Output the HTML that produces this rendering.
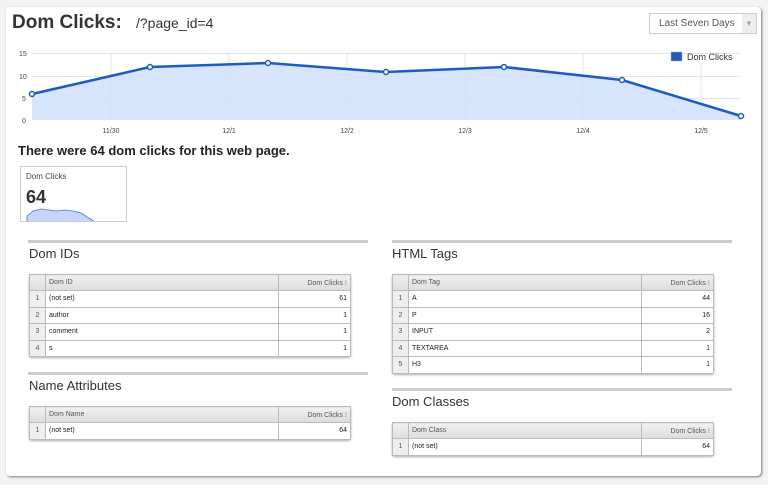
<!DOCTYPE html>
<html><head><style>
body{margin:0;width:768px;height:485px;background:#f2f3f2;font-family:"Liberation Sans",sans-serif;position:relative;overflow:hidden}
.card{position:absolute;left:6px;top:7px;width:755px;height:469px;background:#fff;border-radius:4px;box-shadow:1px 1px 2px #777}
.a{position:absolute}
.rule{position:absolute;height:3px;background:#ccc}
h3{position:absolute;margin:0;font-weight:normal;font-size:13px;color:#333}
table{position:absolute;border-collapse:collapse;font-size:7px;color:#222;border:1px solid #aaa;border-radius:3px;box-shadow:0 1px 2px #aaa}
td{height:16.5px;border:1px solid #bbb;padding:0 3px;box-sizing:border-box;vertical-align:middle}
tr.h td{background:linear-gradient(#f0f0f0,#dcdcdc);color:#555;height:16px}
td.i{background:#eee;color:#555;text-align:center;width:16px;padding:0}
td.n{text-align:right}
</style></head><body>
<div class="card"></div>
<div class="a" style="left:12px;top:12px;font-size:19px;font-weight:bold;color:#333">Dom Clicks:</div>
<div class="a" style="left:136px;top:15px;font-size:14px;color:#333">/?page_id=4</div>
<div class="a" style="left:649px;top:13px;width:108px;height:21px;border:1px solid #ccc;box-sizing:border-box;font-size:10px;color:#555;line-height:19px;padding-left:9px;background:#fff">Last Seven Days<span style="position:absolute;right:0;top:0;width:14px;height:19px;background:#eee;color:#aaa;font-size:8px;text-align:center">▼</span></div>
<svg class="a" style="left:0;top:0" width="768" height="140">
<g stroke="#e4e4e4" stroke-width="1">
<line x1="32" y1="53.5" x2="741" y2="53.5"/><line x1="32" y1="76.5" x2="741" y2="76.5"/><line x1="32" y1="98.5" x2="741" y2="98.5"/>
<line x1="111" y1="53" x2="111" y2="120"/><line x1="229" y1="53" x2="229" y2="120"/><line x1="347" y1="53" x2="347" y2="120"/><line x1="465" y1="53" x2="465" y2="120"/><line x1="583" y1="53" x2="583" y2="120"/><line x1="701" y1="65" x2="701" y2="120"/>
</g>
<polygon points="32,94 150,67 268,63 386,72 504,67 622,80 741,116 741,120 32,120" fill="#cfe0fb" opacity=".85"/>
<polyline points="32,94 150,67 268,63 386,72 504,67 622,80 741,116" fill="none" stroke="#1f5bbf" stroke-width="2.5"/>
<g fill="#fff" stroke="#1f5bbf" stroke-width="1.5"><circle cx="32" cy="94" r="2.5"/><circle cx="150" cy="67" r="2.5"/><circle cx="268" cy="63" r="2.5"/><circle cx="386" cy="72" r="2.5"/><circle cx="504" cy="67" r="2.5"/><circle cx="622" cy="80" r="2.5"/><circle cx="741" cy="116" r="2.5"/></g>
<g font-size="7" fill="#444" font-family="Liberation Sans"><text x="19" y="56">15</text><text x="19" y="79">10</text><text x="22" y="101">5</text><text x="22" y="123">0</text>
<g text-anchor="middle"><text x="111" y="133">11/30</text><text x="229" y="133">12/1</text><text x="347" y="133">12/2</text><text x="465" y="133">12/3</text><text x="583" y="133">12/4</text><text x="701" y="133">12/5</text></g></g>
<rect x="671" y="52" width="11" height="9" fill="#1f5bbf" stroke="#aac" stroke-width=".5"/>
<text x="687" y="60" font-size="9" fill="#333" font-family="Liberation Sans">Dom Clicks</text>
</svg>
<div class="a" style="left:18px;top:143px;font-size:13px;font-weight:bold;color:#222">There were 64 dom clicks for this web page.</div>
<div class="a" style="left:20px;top:166px;width:107px;height:56px;border:1px solid #ccc;box-sizing:border-box;overflow:hidden">
<div class="a" style="left:5px;top:5px;font-size:8px;color:#444">Dom Clicks</div>
<div class="a" style="left:5px;top:20px;font-size:18px;font-weight:bold;color:#333">64</div>
<svg class="a" style="left:0;top:0" width="107" height="56"><path d="M6,49 L12,44 L20,42 L28,43 L36,44 L44,43 L52,44 L60,46 L66,50 L76,56 L6,56Z" fill="#c6d6fa" stroke="#4d6fe0" stroke-width=".8"/></svg>
</div>
<div class="rule" style="left:28px;top:240px;width:340px"></div>
<h3 style="left:29px;top:246px">Dom IDs</h3>
<table style="left:29px;top:274px;width:322px"><tr class="h"><td class="i"></td><td>Dom ID</td><td class="n" style="width:72px">Dom Clicks ⁝</td></tr>
<tr><td class="i">1</td><td>(not set)</td><td class="n">61</td></tr><tr><td class="i">2</td><td>author</td><td class="n">1</td></tr><tr><td class="i">3</td><td>comment</td><td class="n">1</td></tr><tr><td class="i">4</td><td>s</td><td class="n">1</td></tr></table>
<div class="rule" style="left:28px;top:372px;width:340px"></div>
<h3 style="left:29px;top:378px">Name Attributes</h3>
<table style="left:29px;top:406px;width:322px"><tr class="h"><td class="i"></td><td>Dom Name</td><td class="n" style="width:72px">Dom Clicks ⁝</td></tr>
<tr><td class="i">1</td><td>(not set)</td><td class="n">64</td></tr></table>
<div class="rule" style="left:392px;top:240px;width:340px"></div>
<h3 style="left:392px;top:246px">HTML Tags</h3>
<table style="left:392px;top:274px;width:322px"><tr class="h"><td class="i"></td><td>Dom Tag</td><td class="n" style="width:72px">Dom Clicks ⁝</td></tr>
<tr><td class="i">1</td><td>A</td><td class="n">44</td></tr><tr><td class="i">2</td><td>P</td><td class="n">16</td></tr><tr><td class="i">3</td><td>INPUT</td><td class="n">2</td></tr><tr><td class="i">4</td><td>TEXTAREA</td><td class="n">1</td></tr><tr><td class="i">5</td><td>H3</td><td class="n">1</td></tr></table>
<div class="rule" style="left:392px;top:388px;width:340px"></div>
<h3 style="left:392px;top:394px">Dom Classes</h3>
<table style="left:392px;top:422px;width:322px"><tr class="h"><td class="i"></td><td>Dom Class</td><td class="n" style="width:72px">Dom Clicks ⁝</td></tr>
<tr><td class="i">1</td><td>(not set)</td><td class="n">64</td></tr></table>
</body></html>
